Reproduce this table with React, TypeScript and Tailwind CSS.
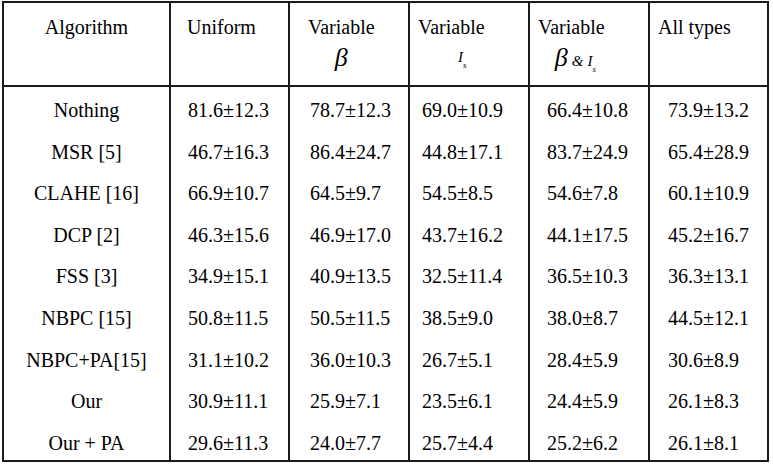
import React from "react";

const rows = [
    ["Nothing", "81.6±12.3", "78.7±12.3", "69.0±10.9", "66.4±10.8", "73.9±13.2"],
    ["MSR [5]", "46.7±16.3", "86.4±24.7", "44.8±17.1", "83.7±24.9", "65.4±28.9"],
    ["CLAHE [16]", "66.9±10.7", "64.5±9.7", "54.5±8.5", "54.6±7.8", "60.1±10.9"],
    ["DCP [2]", "46.3±15.6", "46.9±17.0", "43.7±16.2", "44.1±17.5", "45.2±16.7"],
    ["FSS [3]", "34.9±15.1", "40.9±13.5", "32.5±11.4", "36.5±10.3", "36.3±13.1"],
    ["NBPC [15]", "50.8±11.5", "50.5±11.5", "38.5±9.0", "38.0±8.7", "44.5±12.1"],
    ["NBPC+PA[15]", "31.1±10.2", "36.0±10.3", "26.7±5.1", "28.4±5.9", "30.6±8.9"],
    ["Our", "30.9±11.1", "25.9±7.1", "23.5±6.1", "24.4±5.9", "26.1±8.3"],
    ["Our + PA", "29.6±11.3", "24.0±7.7", "25.7±4.4", "25.2±6.2", "26.1±8.1"],
];

// width, body padding-left per column (col 0 is centered)
const cols = [
    { w: "w-[167px]", body: "items-center", head: "items-center" },
    { w: "w-[119px]", body: "pl-[17px]", head: "pl-[16px]" },
    { w: "w-[120px]", body: "pl-[20px]", head: "pl-[18px]" },
    { w: "w-[120px]", body: "pl-[12px]", head: "pl-[8px]" },
    { w: "w-[120px]", body: "pl-[17px]", head: "pl-[8px]" },
    { w: "w-[117px]", body: "pl-[18px]", head: "pl-[8px]" },
];

const Beta = () => (
    <span className="text-[26px] italic leading-[24px]">β</span>
);

const Is = () => (
    <span className="flex items-end italic text-[15px] leading-[15px]">
        I<span className="relative top-[5px] text-[9px] leading-[9px]">s</span>
    </span>
);

const headers: React.ReactNode[] = [
    <div className="flex flex-col items-center">Algorithm</div>,
    <div className="flex flex-col">Uniform</div>,
    <div className="flex w-fit flex-col items-center">
        <span>Variable</span>
        <span className="mt-[8px]">
            <Beta />
        </span>
    </div>,
    <div className="flex w-fit flex-col items-center">
        <span>Variable</span>
        <span className="ml-[22px] mt-[12px]">
            <Is />
        </span>
    </div>,
    <div className="flex w-fit flex-col items-center">
        <span>Variable</span>
        <span className="ml-[8px] mt-[8px] flex items-baseline gap-[4px] whitespace-nowrap">
            <Beta />
            <span className="text-[15px] italic">&amp;</span>
            <Is />
        </span>
    </div>,
    <div className="flex flex-col">All types</div>,
];

const App: React.FC = () => {
    return (
        <div className="h-[464px] w-[773px] bg-white pl-[2px] pt-px font-['Liberation_Serif'] text-[20px] leading-[22px] text-black">
            <div className="h-[461px] w-[767px] border-2 border-[#1a1a1a]">
                <div className="flex h-[84px] border-b-2 border-[#1a1a1a]">
                    {cols.map((c, i) => (
                        <div
                            key={i}
                            className={`${c.w} flex flex-col pt-[13px] ${c.head} ${
                                i < 5 ? "border-r-2 border-[#1a1a1a]" : ""
                            }`}
                        >
                            {headers[i]}
                        </div>
                    ))}
                </div>
                <div className="flex h-[373px]">
                    {cols.map((c, i) => (
                        <div
                            key={i}
                            className={`${c.w} flex flex-col gap-[19.6px] pt-[12px] ${c.body} ${
                                i < 5 ? "border-r-2 border-[#1a1a1a]" : ""
                            }`}
                        >
                            {rows.map((r, j) => (
                                <div key={j} className="whitespace-nowrap">
                                    {r[i]}
                                </div>
                            ))}
                        </div>
                    ))}
                </div>
            </div>
        </div>
    );
};

export default App;
